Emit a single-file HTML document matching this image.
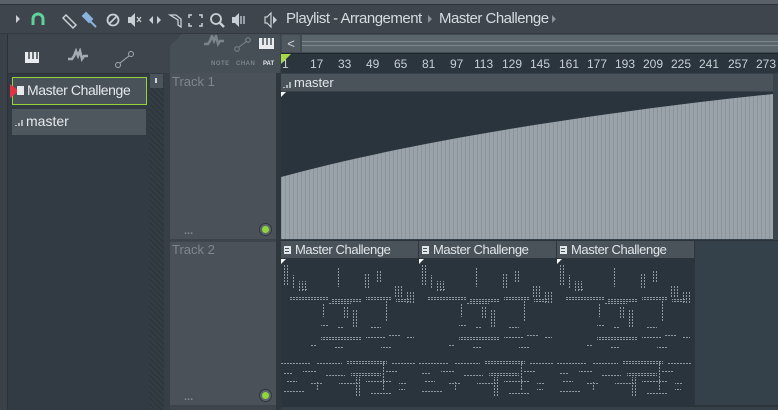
<!DOCTYPE html>
<html><head><meta charset="utf-8"><style>
*{margin:0;padding:0;box-sizing:border-box}
body{width:778px;height:410px;overflow:hidden;background:#3e454c;font-family:"Liberation Sans","DejaVu Sans",sans-serif;position:relative}
.a{position:absolute}
.t{color:#d6dde2;font-size:14px;white-space:nowrap}
</style></head><body>
<div class="a" style="left:0;top:0;width:778px;height:4px;background:#5a6067"></div>
<div class="a" style="left:0;top:4px;width:778px;height:1px;background:#2c3237"></div>
<!-- toolbar -->
<svg class="a" style="left:0;top:5px" width="280" height="28">
<g fill="#c9d0d5" stroke="#c9d0d5">
<path d="M16 10 l4 4 l-4 4z" stroke="none"/>
<path d="M33 20 v-6 a5 5 0 0 1 10 0 v6" fill="none" stroke="#5fd19a" stroke-width="3"/>
<path d="M66 10 l10 10 l-3 3 l-10 -10z" fill="none" stroke-width="1.5"/>
<path d="M86 8 l6 6 l-3 3 l-6 -6z M90 16 l6 6" stroke="#8ab4e0" fill="#8ab4e0" stroke-width="2"/>
<circle cx="113" cy="15" r="5.5" fill="none" stroke-width="1.8"/><path d="M109 19 l8 -8" stroke-width="1.8"/>
<path d="M128 12 h3 l4 -4 v14 l-4 -4 h-3z" stroke="none"/><path d="M137 12 l4 5 M141 12 l-4 5" stroke-width="1.2"/>
<path d="M149 15 l4 -4 v8z M161 15 l-4 -4 v8z" stroke="none"/>
<path d="M170 10 h6 l5 4 v8 l-3 -2 v-5z" fill="none" stroke-width="1.3"/>
<path d="M192 10 h-3 v3 M199 10 h3 v3 M192 21 h-3 v-3 M199 21 h3 v-3" fill="none" stroke-width="1.5"/>
<circle cx="216" cy="14" r="5" fill="none" stroke-width="1.8"/><path d="M220 18 l4 4" stroke-width="2.5"/>
<path d="M232 12 h3 l4 -4 v14 l-4 -4 h-3z" stroke="none"/><path d="M241 11 v8 M244 11 v8" stroke-width="1.3"/>
<path d="M265 12 h2 l4 -4 v14 l-4 -4 h-2z" fill="none" stroke-width="1.2"/><path d="M273 11 l4 4 l-4 4z" stroke="none"/>
</g></svg>
<div class="a t" style="left:286px;top:10px;font-size:15px;letter-spacing:-0.5px">Playlist - Arrangement</div>
<div class="a" style="left:428px;top:15px;border-left:4px solid #8a939a;border-top:4px solid transparent;border-bottom:4px solid transparent"></div>
<div class="a t" style="left:439px;top:10px;font-size:15px;letter-spacing:-0.5px">Master Challenge</div>
<div class="a" style="left:552px;top:15px;border-left:4px solid #8a939a;border-top:4px solid transparent;border-bottom:4px solid transparent"></div>
<div class="a" style="left:0;top:33px;width:778px;height:1px;background:#33393f"></div>

<!-- left panel -->
<div class="a" style="left:0;top:34px;width:8px;height:376px;background:#3a4148;border-right:1px solid #2c3238"></div>
<svg class="a" style="left:20px;top:48px" width="120" height="22">
<path d="M5 4 h14 v11 h-14z" fill="#e8ecef"/><path d="M9 4 v7 M13 4 v7 M17 4 v7" stroke="#3e454c" stroke-width="1.5"/>
<path d="M48 11 h4 l2 -3 l2 -5 l2 5 l2 -5 l2 8 l2 -3 h4" fill="none" stroke="#a3acb3" stroke-width="2.5"/>
<circle cx="98" cy="17" r="2.5" fill="none" stroke="#a3acb3"/><circle cx="111" cy="6" r="2.5" fill="none" stroke="#a3acb3"/><path d="M100 15 l9 -7" stroke="#a3acb3"/>
</svg>
<div class="a" style="left:8px;top:73px;width:141px;height:337px;background:#323b43;border-top:1px solid #2a3138"></div>
<div class="a" style="left:12px;top:77px;width:135px;height:28px;background:#4a5259;border:1px solid #96d339"></div>
<div class="a" style="left:10px;top:84px;border-left:9px solid #e03445;border-top:7px solid transparent;border-bottom:7px solid transparent"></div>
<div class="a" style="left:17px;top:86px;width:7px;height:9px;background:#e5e9ec"></div>
<div class="a t" style="left:27px;top:82px;font-size:14px;color:#e6eaed;letter-spacing:-0.4px">Master Challenge</div>
<div class="a" style="left:12px;top:109px;width:134px;height:26px;background:#4f575e"></div>
<svg class="a" style="left:15px;top:117px" width="10" height="10"><path d="M1 8 v1 M4 6 v3 M7 3 v6" stroke="#d0d6da" stroke-width="1.5"/></svg>
<div class="a t" style="left:26px;top:113px;font-size:14px;color:#e6eaed">master</div>
<!-- scrollbar -->
<div class="a" style="left:149px;top:73px;width:15px;height:337px;background:repeating-linear-gradient(45deg,#2f373e 0 2px,#353d44 2px 4px)"></div>
<div class="a" style="left:150px;top:74px;width:13px;height:14px;background:#4c545b"></div>
<div class="a" style="left:155px;top:78px;width:2px;height:5px;background:#cfd5d9"></div>
<div class="a" style="left:164px;top:73px;width:6px;height:337px;background:#373f46"></div>

<!-- top tab -->
<div class="a" style="left:170px;top:34px;width:110px;height:39px;background:#474f56;clip-path:polygon(12px 0,110px 0,110px 39px,0 39px,0 12px)"></div>
<svg class="a" style="left:200px;top:35px" width="80" height="20">
<path d="M4 9 h4 l2 -3 l2 -5 l2 5 l2 -5 l2 8 l2 -3 h4" fill="none" stroke="#7b848b" stroke-width="2.5"/>
<circle cx="37" cy="14" r="2.3" fill="none" stroke="#7b848b"/><circle cx="48" cy="5" r="2.3" fill="none" stroke="#7b848b"/><path d="M39 12 l8 -6" stroke="#7b848b"/>
<path d="M59 3 h15 v11 h-15z" fill="#e8ecef"/><path d="M63 3 v7 M67 3 v7 M71 3 v7" stroke="#474f56" stroke-width="1.5"/>
</svg>
<div class="a" style="left:211px;top:61px;font-size:6px;font-weight:bold;color:#7b848b;letter-spacing:.5px">NOTE</div>
<div class="a" style="left:236px;top:61px;font-size:6px;font-weight:bold;color:#7b848b;letter-spacing:.5px">CHAN</div>
<div class="a" style="left:263px;top:61px;font-size:6px;font-weight:bold;color:#dfe4e7">PAT</div>

<!-- track headers -->
<div class="a" style="left:170px;top:73px;width:106px;height:168px;background:#4a5158;border-bottom:2px solid #3c434a"></div>
<div class="a" style="left:172px;top:74px;font-size:13px;color:#7d878e">Track 1</div>
<div class="a" style="left:184px;top:225px;font-size:11px;font-weight:bold;color:#7d878e">...</div>
<div class="a" style="left:260px;top:224px;width:11px;height:11px;border-radius:50%;background:#8fd63a;border:2px solid #5d666c;box-shadow:0 0 0 1px #2e353b"></div>
<div class="a" style="left:170px;top:242px;width:106px;height:165px;background:#4a5158;border-bottom:2px solid #3c434a"></div>
<div class="a" style="left:172px;top:242px;font-size:13px;color:#7d878e">Track 2</div>
<div class="a" style="left:184px;top:391px;font-size:11px;font-weight:bold;color:#7d878e">...</div>
<div class="a" style="left:260px;top:390px;width:11px;height:11px;border-radius:50%;background:#8fd63a;border:2px solid #5d666c;box-shadow:0 0 0 1px #2e353b"></div>
<div class="a" style="left:276px;top:73px;width:5px;height:337px;background:#2f373e"></div>

<!-- timeline scroll -->
<div class="a" style="left:281px;top:34px;width:497px;height:19px;background:#434b52"></div>
<div class="a" style="left:282px;top:35px;width:18px;height:17px;background:#50585f;color:#cfd5d9;font-size:13px;line-height:17px;text-align:center">&lt;</div>
<div class="a" style="left:302px;top:35px;width:476px;height:17px;background:#5a646b"></div>
<div class="a" style="left:302px;top:41px;width:476px;height:1px;background:#7b868d"></div>
<div class="a" style="left:302px;top:45px;width:476px;height:1px;background:#7b868d"></div>
<!-- ruler -->
<div class="a" style="left:281px;top:53px;width:497px;height:20px;background:#2b353d;border-top:1px solid #1f272d"></div>
<div class="a" style="left:281px;top:54px;border-left:10px solid #a6d84a;border-bottom:10px solid transparent"></div>
<div class="a" style="left:282px;top:57px;font-size:12px;color:#c9d0d5">1</div>
<div class="a" style="top:57px;left:0;font-size:12px;color:#c9d0d5">
<span class="a" style="left:310px">17</span><span class="a" style="left:338px">33</span><span class="a" style="left:366px">49</span><span class="a" style="left:394px">65</span><span class="a" style="left:422px">81</span><span class="a" style="left:450px">97</span><span class="a" style="left:474px">113</span><span class="a" style="left:502px">129</span><span class="a" style="left:530px">145</span><span class="a" style="left:559px">161</span><span class="a" style="left:587px">177</span><span class="a" style="left:615px">193</span><span class="a" style="left:643px">209</span><span class="a" style="left:671px">225</span><span class="a" style="left:699px">241</span><span class="a" style="left:728px">257</span><span class="a" style="left:756px">273</span>
</div>

<!-- lanes -->
<div class="a" style="left:281px;top:73px;width:497px;height:337px;background:#34404a"></div>
<div class="a" style="left:281px;top:240px;width:497px;height:1px;background:#2a333a"></div>
<div class="a" style="left:281px;top:405px;width:497px;height:2px;background:#2a333a"></div>
<!-- track1 clip -->
<div class="a" style="left:281px;top:74px;width:492px;height:18px;background:#4b535a;border-bottom:1px solid #3a4249"></div>
<svg class="a" style="left:283px;top:79px" width="10" height="10"><path d="M1 8 v1 M4 6 v3 M7 3 v6" stroke="#d0d6da" stroke-width="1.5"/></svg>
<div class="a t" style="left:294px;top:75px;font-size:13px;color:#e2e7ea">master</div>
<svg class="a" style="left:281px;top:92px" width="492" height="147">
<defs><pattern id="v" width="4" height="10" patternUnits="userSpaceOnUse"><rect width="4" height="10" fill="#9aa3a9"/><rect width="1" height="10" fill="#8b949a"/></pattern></defs>
<rect width="492" height="147" fill="#29343c"/>
<path d="M0 85 C120 52 300 22 492 2 V147 H0Z" fill="url(#v)"/>
<path d="M0 0 h5 l-5 5z" fill="#fff"/>
</svg>
<div class="a" style="left:773px;top:74px;width:5px;height:166px;background:#3a444c"></div>

<!-- track2 clips -->
<svg class="a" style="left:281px;top:241px" width="420" height="165">
<defs>
<pattern id="d" width="3" height="2" patternUnits="userSpaceOnUse"><rect width="2" height="1" fill="#8e99a1"/></pattern>
<pattern id="w" width="3" height="3" patternUnits="userSpaceOnUse"><rect width="1" height="2" fill="#8e99a1"/></pattern>
<g id="c">
<rect width="138" height="17" fill="#4b535a"/><rect x="137" width="1" height="17" fill="#2e363c"/>
<rect x="3" y="5" width="7" height="8" fill="#e1e6e9"/><rect x="4" y="7" width="4" height="1" fill="#4b535a"/><rect x="4" y="10" width="4" height="1" fill="#4b535a"/>
<text x="14" y="13" font-family="Liberation Sans,sans-serif" font-size="13" letter-spacing="-0.4" fill="#e2e7ea">Master Challenge</text>
<rect y="17" width="138" height="147" fill="#29343c"/>
<path d="M0 18 h5 l-5 5z" fill="#fff"/>
<g fill="url(#w)">
<rect x="3" y="24" width="6" height="20"/><rect x="10" y="34" width="5" height="14"/><rect x="18" y="40" width="8" height="10"/>
<rect x="55" y="26" width="5" height="20"/><rect x="82" y="32" width="6" height="16"/><rect x="96" y="30" width="4" height="12"/>
<rect x="112" y="44" width="10" height="12"/><rect x="126" y="50" width="8" height="12"/>
<rect x="40" y="62" width="4" height="14"/><rect x="62" y="66" width="6" height="12"/><rect x="72" y="68" width="4" height="18"/>
<rect x="104" y="60" width="4" height="20"/><rect x="34" y="140" width="3" height="10"/><rect x="74" y="136" width="6" height="20"/><rect x="100" y="120" width="4" height="30"/>
</g>
<g fill="url(#d)">
<rect x="20" y="48" width="6" height="2"/><rect x="8" y="56" width="40" height="4"/><rect x="50" y="57" width="30" height="4"/><rect x="85" y="56" width="25" height="4"/><rect x="115" y="58" width="15" height="4"/>
<rect x="48" y="62" width="22" height="2"/><rect x="40" y="84" width="8" height="2"/><rect x="56" y="86" width="6" height="2"/><rect x="90" y="86" width="10" height="2"/>
<rect x="40" y="95" width="40" height="4"/><rect x="85" y="96" width="20" height="2"/><rect x="108" y="94" width="12" height="2"/><rect x="125" y="96" width="8" height="2"/>
<rect x="30" y="104" width="6" height="2"/><rect x="54" y="106" width="8" height="2"/><rect x="100" y="106" width="10" height="2"/>
<rect x="0" y="121" width="30" height="2"/><rect x="36" y="122" width="25" height="2"/><rect x="66" y="120" width="40" height="4"/><rect x="110" y="121" width="25" height="2"/>
<rect x="2" y="131" width="10" height="2"/><rect x="22" y="130" width="14" height="2"/><rect x="44" y="133" width="20" height="2"/><rect x="70" y="131" width="30" height="4"/><rect x="104" y="129" width="12" height="2"/>
<rect x="6" y="140" width="10" height="2"/><rect x="30" y="142" width="12" height="2"/><rect x="58" y="141" width="20" height="2"/><rect x="85" y="140" width="25" height="2"/><rect x="118" y="142" width="8" height="2"/>
<rect x="2" y="150" width="22" height="2"/><rect x="90" y="151" width="20" height="2"/><rect x="118" y="148" width="6" height="2"/>
</g></g></defs>
<use href="#c" x="0"/><use href="#c" x="138"/><use href="#c" x="276"/>
</svg>
</body></html>
